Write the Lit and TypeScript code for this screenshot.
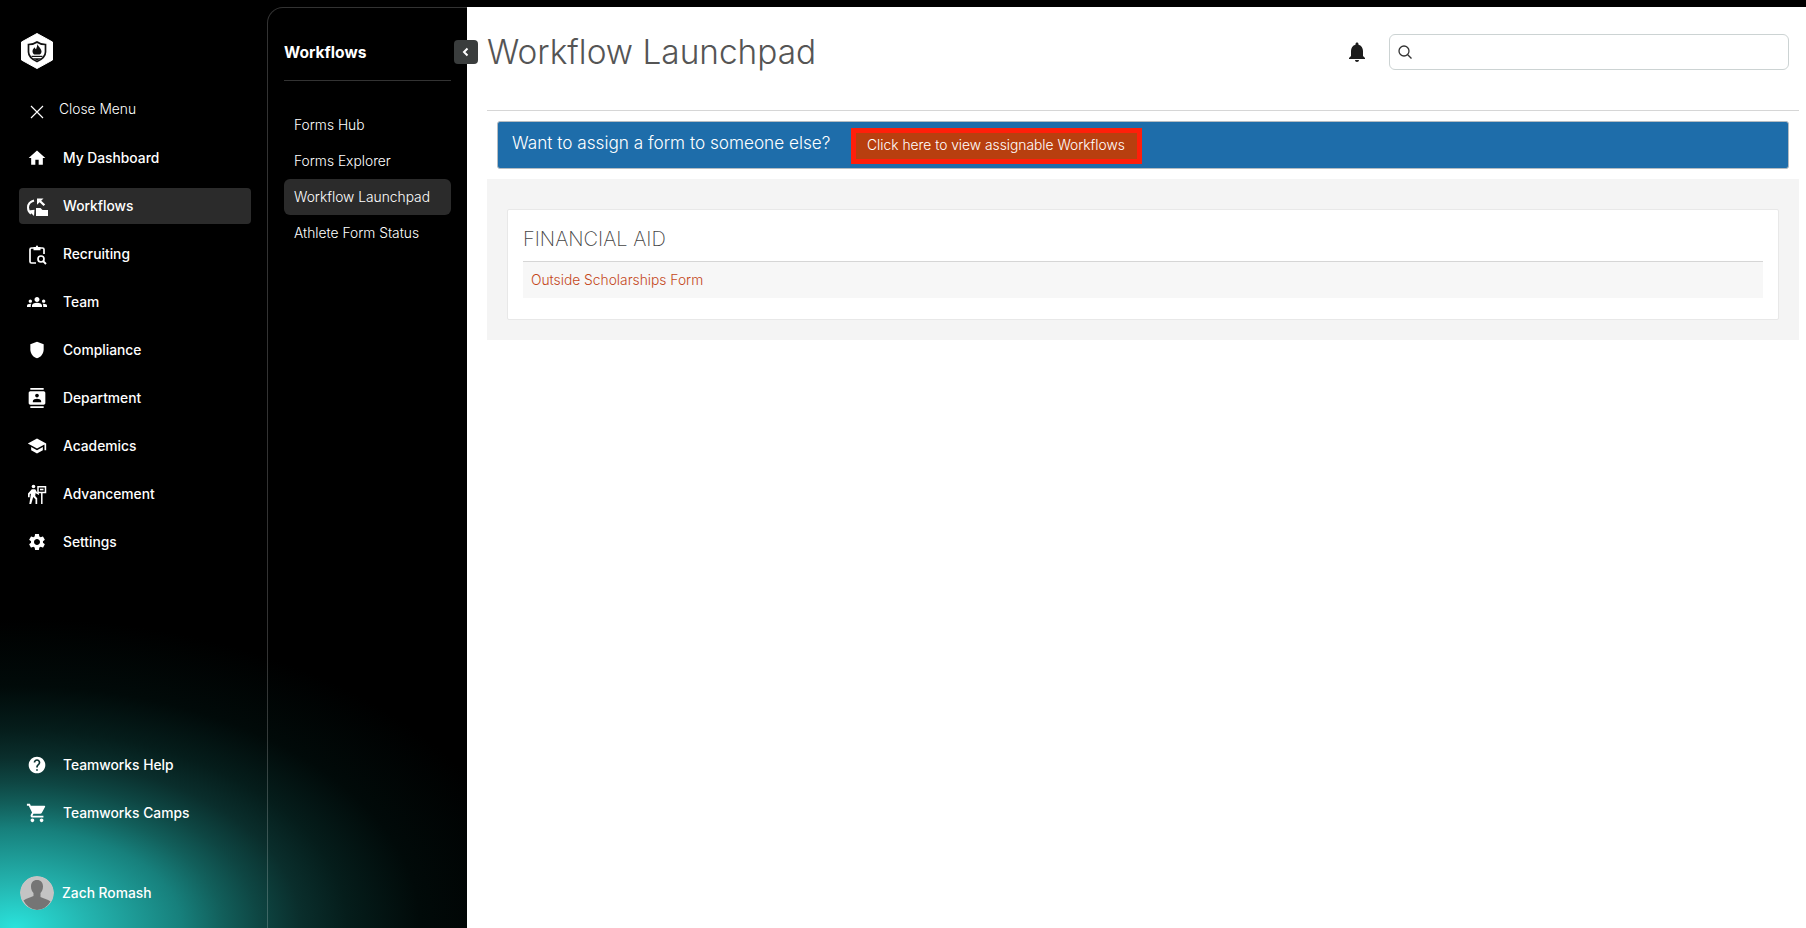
import { LitElement, html, css, svg } from "lit";
import { customElement } from "lit/decorators.js";

const icon = (body: unknown, size = 24) =>
  html`<svg class="ico" width=${size} height=${size} viewBox="0 0 24 24" fill="currentColor">${body}</svg>`;

const ICONS = {
  home: svg`<path d="M10 20v-6h4v6h5v-8h3L12 3 2 12h3v8z" />`,
  workflows: svg`
    <path d="M9 6.500C5.500 7.500 3 10 3 13.500c0 2.500 1 4.700 3 6.200" fill="none" stroke="currentColor" stroke-width="2" />
    <path d="M3.500 16.500 9.500 15.800 9 22z" />
    <path d="M12 4.500h6.500l-2.300 2.200 4 3.800-1.700 1.600-3.900-3.800-2.600 2.500z" />
    <path d="M11 14h4.500l2 2H23v6H11z" />`,
  recruiting: svg`
    <path d="M9 6H6.500C5.500 6 5 6.500 5 7.500v12c0 1 .5 1.500 1.500 1.500H11M15 6h2.500c1 0 1.500.5 1.500 1.500V12" fill="none" stroke="currentColor" stroke-width="1.700" />
    <path d="M8.500 5h2.300c.2-1 .6-1.600 1.200-1.600s1 .6 1.200 1.600h2.300v3.300h-7z" />
    <circle cx="16" cy="17" r="3" fill="none" stroke="currentColor" stroke-width="1.700" />
    <path d="m18.100 19.100 2.900 2.900" stroke="currentColor" stroke-width="1.900" />`,
  team: svg`<path d="M4 13c1.100 0 2-.9 2-2s-.9-2-2-2-2 .9-2 2 .9 2 2 2zm1.130 1.100C4.760 14.040 4.390 14 4 14c-.99 0-1.930.21-2.780.58C.48 14.900 0 15.620 0 16.430V18h4.500v-1.610c0-.83.23-1.610.63-2.290zM20 13c1.100 0 2-.9 2-2s-.9-2-2-2-2 .9-2 2 .9 2 2 2zm4 3.430c0-.81-.48-1.530-1.220-1.850C21.930 14.210 20.990 14 20 14c-.39 0-.76.04-1.130.1.4.68.63 1.460.63 2.290V18H24v-1.570zm-7.760-2.780c-1.170-.52-2.610-.9-4.240-.9s-3.070.39-4.240.9C6.680 14.130 6 15.210 6 16.390V18h12v-1.610c0-1.180-.68-2.260-1.760-2.740zM12 12c1.660 0 3-1.340 3-3s-1.340-3-3-3-3 1.340-3 3 1.340 3 3 3z" />`,
  compliance: svg`<path d="M12 2 4 5v6.090c0 5.050 3.410 9.760 8 10.910 4.590-1.150 8-5.860 8-10.910V5z" />`,
  department: svg`<path d="M20 0H4v2h16V0zM4 24h16v-2H4v2zM20 4H4c-1.100 0-2 .9-2 2v12c0 1.100.9 2 2 2h16c1.100 0 2-.9 2-2V6c0-1.100-.9-2-2-2zm-8 2.750c1.240 0 2.250 1.010 2.250 2.250s-1.010 2.250-2.250 2.250S9.750 10.240 9.750 9 10.760 6.750 12 6.750zM17 17H7v-1.500c0-1.670 3.330-2.500 5-2.500s5 .83 5 2.500V17z" />`,
  academics: svg`<path d="M5 13.180v4L12 21l7-3.820v-4L12 17l-7-3.820zM12 3 1 9l11 6 9-4.910V17h2V9L12 3z" />`,
  advancement: svg`
    <circle cx="8.500" cy="4.500" r="1.800" />
    <path d="M6.800 7.200h3.400l1.800 3 2 1.300v1.600l-2.800-1.500-.5-.8-.5 3.200 2 2.200V22h-1.700v-4.800l-2.300-2.300L6.200 22H4.300L6 11.500l-1.300.9v2.800H3v-3.700z" />
    <path d="M13 4.800h7.500v5.700H13z" fill="none" stroke="currentColor" stroke-width="1.500" />
    <path d="M15 6.700h3.500v1.600H15z" />
    <path d="M16.800 10.500V22" stroke="currentColor" stroke-width="1.500" />`,
  settings: svg`<path d="M19.140 12.940c.04-.3.06-.61.06-.94 0-.32-.02-.64-.07-.94l2.030-1.580c.18-.14.23-.41.12-.61l-1.920-3.320c-.12-.22-.37-.29-.59-.22l-2.390.96c-.5-.38-1.030-.7-1.620-.94l-.36-2.540c-.04-.24-.24-.41-.48-.41h-3.840c-.24 0-.43.17-.47.41l-.36 2.540c-.59.24-1.130.57-1.620.94l-2.390-.96c-.22-.08-.47 0-.59.22L2.740 8.870c-.12.21-.08.47.12.61l2.030 1.580c-.05.3-.09.63-.09.94s.02.64.07.94l-2.030 1.580c-.18.14-.23.41-.12.61l1.920 3.320c.12.22.37.29.59.22l2.390-.96c.5.38 1.030.7 1.620.94l.36 2.540c.05.24.24.41.48.41h3.840c.24 0 .44-.17.47-.41l.36-2.540c.59-.24 1.130-.56 1.620-.94l2.390.96c.22.08.47 0 .59-.22l1.920-3.320c.12-.22.07-.47-.12-.61l-2.010-1.580zM12 15.600c-1.980 0-3.600-1.620-3.600-3.600s1.620-3.600 3.600-3.600 3.600 1.620 3.600 3.600-1.620 3.600-3.600 3.600z" />`,
  help: svg`<path d="M12 2C6.480 2 2 6.480 2 12s4.480 10 10 10 10-4.480 10-10S17.520 2 12 2zm1 17h-2v-2h2v2zm2.070-7.750-.9.92C13.450 12.900 13 13.500 13 15h-2v-.5c0-1.100.45-2.100 1.170-2.830l1.240-1.260c.37-.36.59-.86.59-1.410 0-1.100-.9-2-2-2s-2 .9-2 2H8c0-2.210 1.790-4 4-4s4 1.790 4 4c0 .88-.36 1.680-.93 2.250z" />`,
  camps: svg`<path d="M7 18c-1.100 0-1.990.9-1.990 2S5.900 22 7 22s2-.9 2-2-.9-2-2-2zM1 2v2h2l3.600 7.590-1.350 2.450c-.16.28-.25.61-.25.960 0 1.100.9 2 2 2h12v-2H7.420c-.14 0-.25-.11-.25-.25l.03-.12.9-1.830h7.450c.75 0 1.410-.41 1.750-1.030l3.580-6.490A1.003 1.003 0 0 0 20 4H5.210l-.94-2H1zm16 16c-1.100 0-1.990.9-1.990 2s.89 2 1.990 2 2-.9 2-2-.9-2-2-2z" />`,
  bell: svg`<path d="M12 22c1.100 0 2-.9 2-2h-4c0 1.100.9 2 2 2zm6-6v-5c0-3.070-1.630-5.640-4.500-6.320V4c0-.83-.67-1.500-1.500-1.500s-1.500.67-1.500 1.500v.68C7.640 5.360 6 7.920 6 11v5l-2 2v1h16v-1l-2-2z" />`,
};

const MAIN_NAV: { label: string; icon: keyof typeof ICONS; size?: number; active?: boolean }[] = [
  { label: "My Dashboard", icon: "home" },
  { label: "Workflows", icon: "workflows", size: 24, active: true },
  { label: "Recruiting", icon: "recruiting", size: 24 },
  { label: "Team", icon: "team" },
  { label: "Compliance", icon: "compliance" },
  { label: "Department", icon: "department" },
  { label: "Academics", icon: "academics" },
  { label: "Advancement", icon: "advancement", size: 24 },
  { label: "Settings", icon: "settings" },
];

const SUB_NAV = ["Forms Hub", "Forms Explorer", "Workflow Launchpad", "Athlete Form Status"];

@customElement("app-root")
export class AppRoot extends LitElement {
  static styles = css`
    :host {
      display: block;
      height: 928px;
      overflow: hidden;
      background: #000;
      font-family: Inter, "Liberation Sans", sans-serif;
    }

    .shell {
      display: flex;
      height: 100%;
      padding-top: 7px;
      box-sizing: border-box;
    }

    .nav-wrap {
      display: flex;
      width: 467px;
      flex-shrink: 0;
      background: radial-gradient(
        ellipse 520px 310px at 15px 100%,
        #2ae3dc 0,
        #24b5b0 14%,
        #17807c 32%,
        #125f5b 40%,
        #0e4643 47%,
        #0a2e2c 55%,
        #051d1b 64%,
        #010a09 78%,
        #000 100%
      );
    }

    .rail {
      width: 267px;
      flex-shrink: 0;
      display: flex;
      flex-direction: column;
      box-sizing: border-box;
      padding: 26px 16px 18px 19px;
      color: #fff;
    }

    .logo {
      width: 36px;
      height: 36px;
    }

    .close {
      display: flex;
      align-items: center;
      gap: 12px;
      margin: 26px 0 11px 8px;
      height: 34px;
      font-size: 13.8px;
      font-weight: 300;
    }

    .close span {
      margin-top: -6px;
    }

    .items {
      display: flex;
      flex-direction: column;
      gap: 12px;
      list-style: none;
      margin: 0;
      padding: 0;
    }

    .item {
      height: 36px;
      display: flex;
      align-items: center;
      border-radius: 4px;
      font-size: 13.8px;
      font-weight: 500;
      padding-left: 8px;
    }

    .item.active {
      background: #2b2b2b;
    }

    .item .slot {
      width: 20px;
      height: 24px;
      display: flex;
      align-items: center;
      justify-content: center;
      margin-right: 16px;
    }

    .ico {
      display: block;
      flex-shrink: 0;
    }

    .bottom {
      margin-top: auto;
    }

    .bottom .items {
      margin-bottom: 45px;
    }

    .user {
      display: flex;
      align-items: center;
      gap: 8px;
      font-size: 13.8px;
      font-weight: 500;
      margin-left: 1px;
    }

    .avatar {
      width: 34px;
      height: 34px;
      border-radius: 50%;
      display: block;
    }

    .panel {
      position: relative;
      flex: 1;
      box-sizing: border-box;
      border-left: 1px solid rgba(255, 255, 255, 0.2);
      border-top: 1px solid rgba(255, 255, 255, 0.2);
      border-top-left-radius: 16px;
      padding: 0 16px;
      color: #fff;
    }

    .panel-title {
      height: 73px;
      box-sizing: border-box;
      padding-top: 33px;
      margin: 0;
      line-height: 24px;
      font-size: 15.6px;
      font-weight: 700;
      border-bottom: 1px solid #333;
    }

    .sub {
      display: flex;
      flex-direction: column;
      list-style: none;
      margin: 26px 0 0;
      padding: 0;
    }

    .sub li {
      height: 36px;
      display: flex;
      align-items: center;
      box-sizing: border-box;
      padding: 0 0 1px 10px;
      border-radius: 6px;
      font-size: 13.8px;
      font-weight: 300;
    }

    .sub li.active {
      background: #2b2b2b;
    }

    .toggle {
      position: absolute;
      left: 186px;
      top: 32px;
      width: 24px;
      height: 24px;
      border-radius: 4px;
      background: #3a3d3d;
      color: #fff;
      display: flex;
      align-items: center;
      justify-content: center;
      z-index: 2;
    }

    .main {
      flex: 1;
      min-width: 0;
      background: #fff;
      box-sizing: border-box;
      padding: 0 7px 0 20px;
      color: #555;
    }

    .header {
      height: 76px;
      border-bottom: 1px solid #d6d6d6;
      display: flex;
      align-items: flex-start;
      padding: 27px 10px 0 0;
    }

    .title {
      margin: 0;
      font-size: 33.4px;
      line-height: 36px;
      font-weight: 300;
      color: #555;
      flex: 1;
    }

    .bell {
      color: #1c1c1c;
      margin: 6px 20px 0 0;
    }

    .search {
      width: 400px;
      height: 36px;
      box-sizing: border-box;
      border: 1px solid #ccd3d3;
      border-radius: 6px;
      display: flex;
      align-items: center;
      padding-left: 7px;
      color: #333;
    }

    .banner {
      margin: 10px 10px;
      height: 48px;
      box-sizing: border-box;
      background: #1e6daa;
      border: 1px solid #b5bcc2;
      border-radius: 3px;
      display: flex;
      align-items: center;
      padding-left: 14px;
      color: #fff;
    }

    .banner-text {
      font-size: 17.2px;
      font-weight: 300;
      margin-top: -6px;
    }

    .cta {
      margin: 2px 0 0 21px;
      height: 36px;
      box-sizing: border-box;
      width: 291px;
      padding: 0 2px 3px 0;
      border: 5px solid #ff1f0a;
      background: #b83f0f;
      color: #fff;
      display: flex;
      align-items: center;
      justify-content: center;
      font-size: 13.8px;
      font-weight: 300;
      white-space: nowrap;
    }

    .section {
      background: #f4f4f4;
      padding: 30px 20px 20px;
      height: 161px;
      box-sizing: border-box;
    }

    .card {
      background: #fff;
      border: 1px solid #e8e8e8;
      border-radius: 2px;
      height: 111px;
      box-sizing: border-box;
      padding: 15px 15px 0;
    }

    .card h2 {
      margin: 0;
      height: 36px;
      line-height: 28px;
      font-size: 20px;
      font-weight: 200;
      color: #444;
      border-bottom: 1px solid #d6d6d6;
    }

    .row {
      height: 36px;
      display: flex;
      align-items: center;
      padding-left: 8px;
      box-sizing: border-box;
      background: #f7f7f7;
      color: #c4471a;
      font-size: 13.8px;
      font-weight: 300;
    }
  `;

  render() {
    return html`
      <div class="shell">
        <div class="nav-wrap">
          <aside class="rail">
            <svg class="logo" viewBox="0 0 36 36">
              <path d="M18 .5 33.500 9v18L18 35.500 2.500 27V9z" fill="#fff" stroke="#fff" stroke-linejoin="round" stroke-width="1" />
              <path d="M9.500 11.500C13 11.500 16 10.500 18 9c2 1.500 5 2.500 8.500 2.500V19c0 4.500-4 7.500-8.500 9.500C13.500 26.500 9.500 23.500 9.500 19z" fill="none" stroke="#111" stroke-width="1.700" />
              <path d="M18.500 11c.5 2.500 4 4.500 4 7.500 0 1.500-.8 2.500-1.800 3h-5.400c-1.200-.8-1.800-2-1.800-3.300 0-1.700 1.200-2.700 2-4 .4 1 .9 1.500 1.500 2 .7-1.500 1.200-3.300 1.500-5.200z" fill="#111" />
              <path d="M12.500 22.800h11v1.200h-11z" fill="#111" />
              <path d="M13.500 25.300h9L18 27.500z" fill="#111" />
            </svg>
            <div class="close">
              ${icon(svg`<path d="m4.800 4.800 14.400 14.400M19.200 4.800 4.800 19.200" fill="none" stroke="currentColor" stroke-width="1.400" />`, 20)}
              <span>Close Menu</span>
            </div>
            <ul class="items">
              ${MAIN_NAV.map(
                (item) => html`<li class="item ${item.active ? "active" : ""}">
                  <span class="slot">${icon(ICONS[item.icon], item.size ?? 20)}</span>
                  ${item.label}
                </li>`,
              )}
            </ul>
            <div class="bottom">
              <ul class="items">
                <li class="item"><span class="slot">${icon(ICONS.help, 20)}</span>Teamworks Help</li>
                <li class="item"><span class="slot">${icon(ICONS.camps, 22)}</span>Teamworks Camps</li>
              </ul>
              <div class="user">
                <svg class="avatar" viewBox="0 0 34 34">
                  <circle cx="17" cy="17" r="17" fill="#c4c4c4" />
                  <path d="M17 4c-3.800 0-6 2.500-6 6.500 0 2.800 1 5 2.500 6.500v3c-3 1.500-7 2-10 4.500A17 17 0 0 0 17 34a17 17 0 0 0 13.500-8.500c-3-2.500-7-3-10-4.500v-4c1.500-1.500 2.500-3.700 2.500-6.500C23 6.500 20.800 4 17 4z" fill="#757575" />
                </svg>
                Zach Romash
              </div>
            </div>
          </aside>
          <nav class="panel">
            <h3 class="panel-title">Workflows</h3>
            <ul class="sub">
              ${SUB_NAV.map(
                (label) => html`<li class=${label === "Workflow Launchpad" ? "active" : ""}>${label}</li>`,
              )}
            </ul>
            <div class="toggle">
              <svg width="12" height="12" viewBox="0 0 12 12"><path d="M7.500 2.500 4 6l3.500 3.500" fill="none" stroke="currentColor" stroke-width="2" /></svg>
            </div>
          </nav>
        </div>
        <main class="main">
          <header class="header">
            <h1 class="title">Workflow Launchpad</h1>
            <span class="bell">${icon(ICONS.bell, 24)}</span>
            <div class="search">
              <svg width="16" height="16" viewBox="0 0 16 16" fill="none" stroke="currentColor" stroke-width="1.300">
                <circle cx="7" cy="7" r="5" />
                <path d="m10.700 10.700 3.800 3.800" />
              </svg>
            </div>
          </header>
          <div class="banner">
            <span class="banner-text">Want to assign a form to someone else?</span>
            <span class="cta">Click here to view assignable Workflows</span>
          </div>
          <section class="section">
            <div class="card">
              <h2>FINANCIAL AID</h2>
              <div class="row">Outside Scholarships Form</div>
            </div>
          </section>
        </main>
      </div>
    `;
  }
}
